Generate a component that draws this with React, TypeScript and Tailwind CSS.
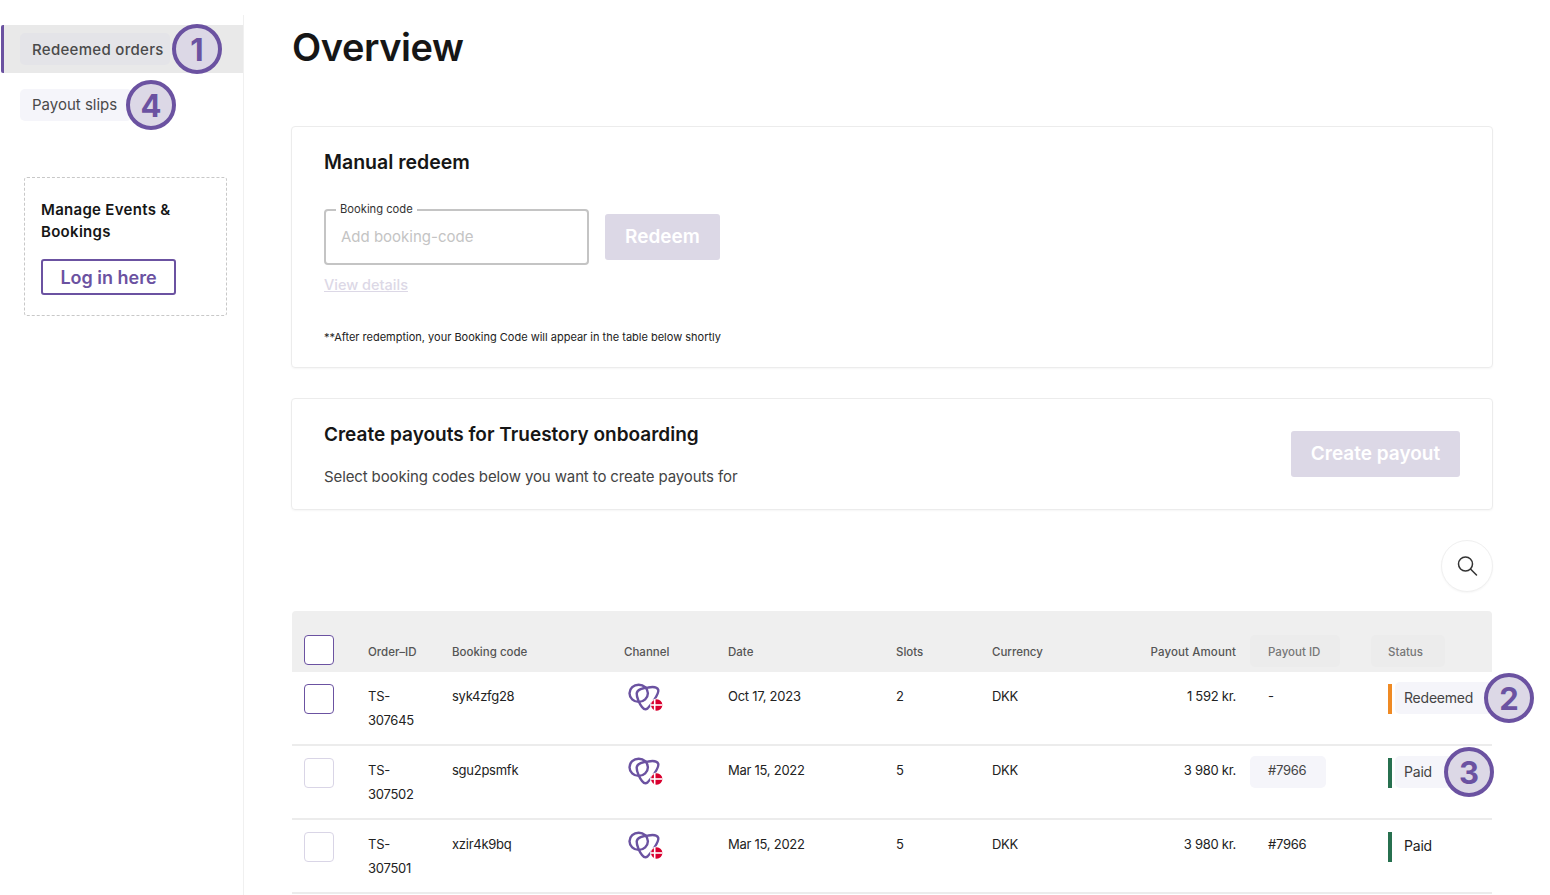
const FONT = "font-['Inter','Liberation_Sans',sans-serif]";

function Badge({ n, className }: { n: string; className: string }) {
  return (
    <span className={`absolute z-10 flex h-[50px] w-[50px] items-center justify-center rounded-full border-[4px] border-[#6b52a1] bg-[#dcd8e6] text-[31px] font-bold leading-none text-[#6b52a1] ${className}`}>
      {n}
    </span>
  );
}

function ChannelIcon() {
  return (
    <svg width="36" height="30" viewBox="0 0 36 30" className="block">
      <g fill="none" stroke="#6b52a1" strokeWidth="2.4" strokeLinecap="round" strokeLinejoin="round">
        <ellipse cx="10.700" cy="10.300" rx="9.200" ry="8.600" />
        <path d="M8.700 10.300C9 7 15 4.500 20.300 4.500C24 3.800 29 3.500 30.300 7C31 11 23 22 19.500 25.500C17.500 27 15.500 26 14 24C12 21.500 8.500 15 8.700 10.300Z" />
      </g>
      <circle cx="28.700" cy="22" r="6.600" fill="#fff" />
      <circle cx="28.700" cy="22" r="5.700" fill="#d9002f" />
      <rect x="23" y="21.200" width="11.400" height="1.600" fill="#fff" />
      <rect x="25.900" y="16.300" width="1.600" height="11.400" fill="#fff" />
    </svg>
  );
}

type Row = {
  id: string;
  code: string;
  date: string;
  slots: string;
  amount: string;
  payout: string;
  chipPayout?: boolean;
  status: string;
  color: string;
  chipStatus?: boolean;
  active?: boolean;
  badge?: React.ReactNode;
};

const rows: Row[] = [
  { id: "307645", code: "syk4zfg28", date: "Oct 17, 2023", slots: "2", amount: "1 592 kr.", payout: "-", status: "Redeemed", color: "bg-[#ef8a24]", chipStatus: true, active: true, badge: <Badge n="2" className="left-[128px] top-[1px]" /> },
  { id: "307502", code: "sgu2psmfk", date: "Mar 15, 2022", slots: "5", amount: "3 980 kr.", payout: "#7966", chipPayout: true, status: "Paid", color: "bg-[#27704f]", chipStatus: true, badge: <Badge n="3" className="left-[88px] top-[1px]" /> },
  { id: "307501", code: "xzir4k9bq", date: "Mar 15, 2022", slots: "5", amount: "3 980 kr.", payout: "#7966", status: "Paid", color: "bg-[#27704f]" },
];

function TableRow({ r }: { r: Row }) {
  return (
    <div className="grid h-[74px] grid-cols-[76px_84px_172px_104px_168px_96px_120px_124px_120px_1fr] border-b-2 border-[#ececec] text-[13px] leading-[24px] tracking-[-0.02em] text-[#222]">
      <div className="pl-[12px] pt-[12px]">
        <div className={`h-[30px] w-[30px] rounded-[4px] border bg-white ${r.active ? "border-[#6b52a1]" : "border-[#d9d5e6]"}`} />
      </div>
      <div className="pt-[12px]">TS-<br />{r.id}</div>
      <div className="pt-[12px]">{r.code}</div>
      <div className="pl-[4px] pt-[11px]"><ChannelIcon /></div>
      <div className="pt-[12px]">{r.date}</div>
      <div className="pt-[12px]">{r.slots}</div>
      <div className="pt-[12px]">DKK</div>
      <div className="pt-[12px] text-right">{r.amount}</div>
      <div className="pl-[14px] pt-[10px]">
        <div className={`flex h-[32px] w-[76px] items-start rounded-[5px] pl-[18px] pt-[2px] ${r.chipPayout ? "bg-[#f5f5fa] text-[#444]" : ""}`}>{r.payout}</div>
      </div>
      <div className="relative flex items-start pl-[32px] pt-[12px] text-[14px] tracking-[-0.015em]">
        <span className={`h-[30px] w-[4px] ${r.color}`} />
        <span className={`ml-[3px] mt-[-2px] flex h-[32px] items-center rounded-[5px] pl-[9px] pr-[30px] ${r.chipStatus ? "bg-[#f5f5fa] text-[#444]" : "text-[#222]"}`}>{r.status}</span>
        {r.badge}
      </div>
    </div>
  );
}

export default function App() {
  return (
    <div className={`flex h-[895px] w-full overflow-hidden bg-white ${FONT}`}>
      <aside className="mt-[15px] w-[244px] shrink-0 border-r border-[#f0f0f0] pt-[10px]">
        <div className="relative ml-[1px] flex h-[48px] items-center rounded-l-[2px] border-l-[3px] border-[#6b52a1] bg-[#e9e9e9] pl-[16px]">
          <span className="flex h-[32px] w-[150px] items-center rounded-[5px] bg-[#e4e4e8] pl-[12px] pt-[3px] text-[15px] font-medium tracking-[0.02em] text-[#4a4a4a]">Redeemed orders</span>
          <Badge n="1" className="left-[168px] top-[-1px]" />
        </div>
        <div className="relative ml-[20px] mt-[16px] flex h-[32px] w-[112px] items-center rounded-[5px] bg-[#f5f5fa] pl-[12px] text-[15px] text-[#4a4a4a]">
          Payout slips
          <Badge n="4" className="left-[106px] top-[-9px]" />
        </div>
        <div className="ml-[24px] mt-[56px] h-[139px] w-[203px] rounded-[3px] border border-dashed border-[#c8c8c8] pl-[16px] pt-[21px]">
          <p className="text-[15px] font-semibold leading-[22px] tracking-[0.02em] text-[#161616]">Manage Events &<br />Bookings</p>
          <button className="mt-[16px] h-[36px] w-[135px] rounded-[3px] border-2 border-[#6b52a1] text-[18px] font-semibold text-[#6b52a1]">Log in here</button>
        </div>
      </aside>

      <main className="w-[1249px] shrink-0 pl-[47px]">
        <h1 className="mt-[23px] h-[103px] pl-[1px] text-[38px] font-semibold leading-[48px] tracking-[-0.012em] text-[#161616]">Overview</h1>

        <section className="h-[242px] rounded-[4px] border border-[#ececec] pl-[32px] pt-[22px] shadow-[0_1px_2px_rgba(0,0,0,0.04)]">
          <h2 className="text-[19.500px] font-semibold leading-[26px] text-[#161616]">Manual redeem</h2>
          <div className="mt-[34px] flex items-center gap-[16px]">
            <div className="relative flex h-[56px] w-[265px] items-center rounded-[4px] border-2 border-[#c4c4c4] pl-[15px] text-[15px] text-[#c4c4c4]">
              <span className="absolute left-[10px] top-[-9px] bg-white px-[4px] text-[11.200px] leading-[14px] text-[#333]">Booking code</span>
              Add booking-code
            </div>
            <button className="h-[46px] w-[115px] rounded-[3px] bg-[#dcd8e6] pt-[1px] text-[19px] font-semibold text-white">Redeem</button>
          </div>
          <a className="mt-[10px] block text-[14.500px] font-medium leading-[20px] text-[#dcd8e6] underline">View details</a>
          <p className="mt-[33px] text-[11px] leading-[18px] text-[#222]">**After redemption, your Booking Code will appear in the table below shortly</p>
        </section>

        <section className="mt-[30px] flex h-[112px] items-start justify-between rounded-[4px] border border-[#ececec] pl-[32px] pr-[32px] pt-[23px] shadow-[0_1px_2px_rgba(0,0,0,0.04)]">
          <div>
            <h2 className="text-[19px] font-semibold leading-[26px] text-[#161616]">Create payouts for Truestory onboarding</h2>
            <p className="mt-[18px] text-[15px] leading-[22px] tracking-[-0.008em] text-[#444]">Select booking codes below you want to create payouts for</p>
          </div>
          <button className="mt-[9px] h-[46px] w-[169px] rounded-[3px] bg-[#dcd8e6] pt-[1px] text-[19px] font-semibold text-white">Create payout</button>
        </section>

        <div className="mt-[30px] flex justify-end">
          <button className="flex h-[52px] w-[52px] items-center justify-center rounded-full border border-[#f0f0f0] bg-white shadow-[0_1px_2px_rgba(0,0,0,0.04)]">
            <svg width="24" height="24" viewBox="0 0 24 24" fill="none" stroke="#333" strokeWidth="1.500" strokeLinecap="round"><circle cx="10.500" cy="10" r="7" /><path d="M15.500 15l6 6" /></svg>
          </button>
        </div>

        <div className="ml-[1px] mt-[19px] w-[1200px]">
          <div className="grid h-[61px] grid-cols-[76px_84px_172px_104px_168px_96px_120px_124px_120px_1fr] rounded-t-[4px] bg-[#efefef] text-[11.500px] font-medium leading-[16px] text-[#555]">
            <div className="pl-[12px] pt-[24px]"><div className="h-[30px] w-[30px] rounded-[4px] border border-[#6b52a1] bg-white" /></div>
            <div className="pt-[33px]">Order–ID</div>
            <div className="pt-[33px]">Booking code</div>
            <div className="pt-[33px]">Channel</div>
            <div className="pt-[33px]">Date</div>
            <div className="pt-[33px]">Slots</div>
            <div className="pt-[33px]">Currency</div>
            <div className="pt-[33px] text-right tracking-[0.01em]">Payout Amount</div>
            <div className="pl-[14px] pt-[24px]"><div className="flex h-[32px] w-[90px] items-center rounded-[5px] bg-[#ececec] pl-[18px] pt-[2px] text-[#777]">Payout ID</div></div>
            <div className="pl-[15px] pt-[24px]"><div className="flex h-[32px] w-[74px] items-center rounded-[5px] bg-[#ececec] pl-[17px] pt-[2px] text-[#777]">Status</div></div>
          </div>
          {rows.map((r) => <TableRow key={r.id} r={r} />)}
        </div>
      </main>
    </div>
  );
}
